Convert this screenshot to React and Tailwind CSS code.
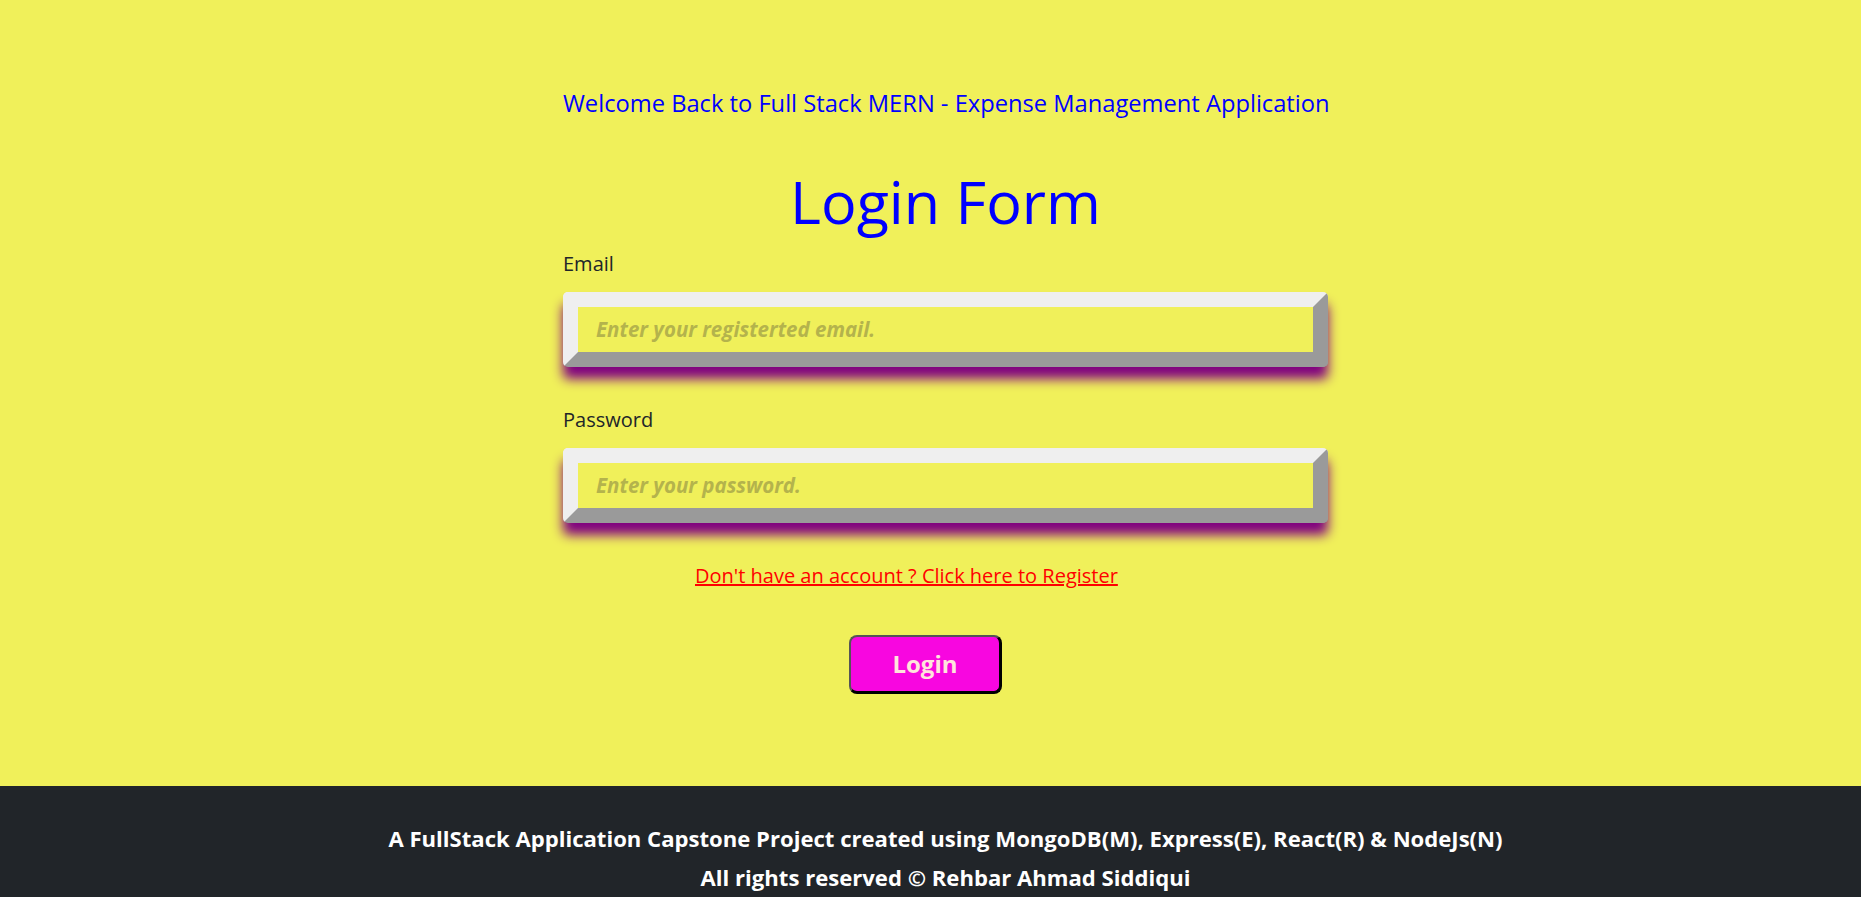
export default function App() {
  const font = { fontFamily: '"Open Sans", "Noto Sans", sans-serif' };
  return (
    <div className="w-full" style={font}>
      <section className="bg-[#f0f05a] h-[786px] pl-[30px]">
        <div className="w-[765px] mx-auto flex flex-col">
          <p className="pt-[89px] text-[23.7px] leading-[28.8px] whitespace-nowrap text-[#0000ff]">
            Welcome Back to Full Stack MERN - Expense Management Application
          </p>
          <h1 className="mt-[47px] text-center text-[59.3px] leading-[72px] text-[#0000ff]">
            Login Form
          </h1>
          <label className="mt-[12px] text-[20px] leading-[30px] text-[#212529]">Email</label>
          <input
            type="email"
            placeholder="Enter your registerted email."
            className="mt-[13px] h-[75px] w-full rounded-[5px] border-[15px] border-solid border-t-[#efefef] border-l-[#efefef] border-b-[#9a9a9a] border-r-[#9a9a9a] bg-[#f0f05a] px-[18px] text-[20.5px] font-bold italic outline-none placeholder:text-[#b4b34c] shadow-[0_12px_12px_#800080]"
          />
          <label className="mt-[38px] text-[20px] leading-[30px] text-[#212529]">Password</label>
          <input
            type="password"
            placeholder="Enter your password."
            className="mt-[13px] h-[75px] w-full rounded-[5px] border-[15px] border-solid border-t-[#efefef] border-l-[#efefef] border-b-[#9a9a9a] border-r-[#9a9a9a] bg-[#f0f05a] px-[18px] text-[20.5px] font-bold italic outline-none placeholder:text-[#b4b34c] shadow-[0_12px_12px_#800080]"
          />
          <div className="mt-[38px] ml-[132px] text-[20px] leading-[30px]">
            <a href="#" className="text-[#ff0000] underline">
              Don't have an account ? Click here to Register
            </a>
          </div>
          <div className="mt-[44px] ml-[286px]">
            <button className="w-[153px] h-[59px] rounded-[8px] bg-[#f806e0] border-solid border-t-[2px] border-l-[2px] border-b-[3px] border-r-[3px] border-t-[#555] border-l-[#555] border-b-black border-r-black text-[24px] font-bold text-[#ffe4dc]">
              Login
            </button>
          </div>
        </div>
      </section>
      <footer className="bg-[#212529] pl-[30px] pt-[37px] pb-[40px] text-center text-white font-bold text-[22.1px] leading-[30px]">
        <p>A FullStack Application Capstone Project created using MongoDB(M), Express(E), React(R) &amp; NodeJs(N)</p>
        <p className="mt-[9px]">All rights reserved © Rehbar Ahmad Siddiqui</p>
      </footer>
    </div>
  );
}
